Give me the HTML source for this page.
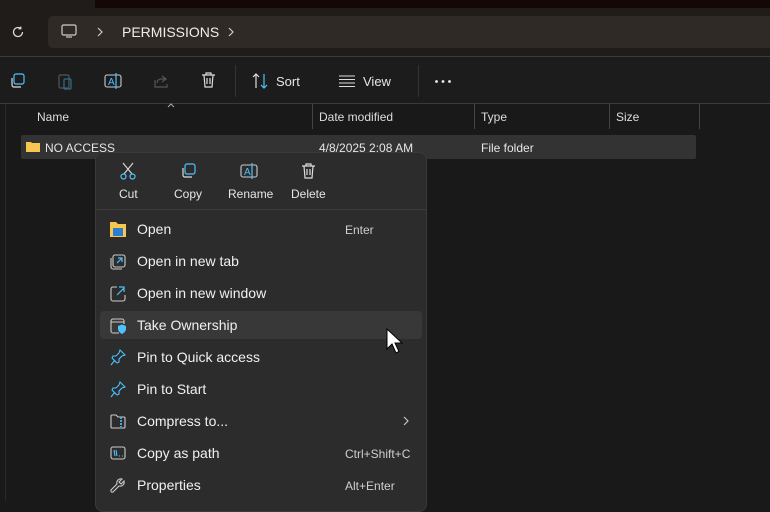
<!DOCTYPE html>
<html><head><style>
*{margin:0;padding:0;box-sizing:border-box}
body{width:770px;height:501px;overflow:hidden;background:#191919;font-family:"Liberation Sans",sans-serif;color:#e6e6e6;position:relative;font-size:13px}
.a{position:absolute}
svg{position:absolute;overflow:visible}
.mi{position:absolute;left:137px;font-size:14px;color:#f0f0f0}
.sc{position:absolute;font-size:12px;color:#cfcfcf}
</style></head><body>
<div class="a" style="left:0;top:0;width:770px;height:56px;background:#201c1a"></div>
<div class="a" style="left:95px;top:0;width:675px;height:8px;background:#130806"></div>
<div class="a" style="left:48px;top:16px;width:722px;height:32px;background:#302a27;border-radius:5px 0 0 5px"></div>
<svg style="left:11px;top:25px" width="14" height="14" viewBox="0 0 14 14"><path d="M11.5 7A4.5 4.5 0 1 1 9.5 3.3M9.8 1.5v2.3h-2.3" fill="none" stroke="#ddd" stroke-width="1.2"/></svg>
<svg style="left:61px;top:24px" width="16" height="14"><rect x="1" y="1" width="14" height="10" rx="1.5" fill="none" stroke="#ccc" stroke-width="1.2"/><path d="M5 13h6" stroke="#ccc" stroke-width="1.2"/></svg>
<svg style="left:97px;top:27px" width="6" height="10"><path d="M1 1l4 4-4 4" fill="none" stroke="#ccc" stroke-width="1.2"/></svg>
<div class="a" style="left:122px;top:24px;font-size:14px;color:#eee">PERMISSIONS</div>
<svg style="left:228px;top:27px" width="6" height="10"><path d="M1 1l4 4-4 4" fill="none" stroke="#ccc" stroke-width="1.2"/></svg>
<div class="a" style="left:0;top:56px;width:770px;height:1px;background:#3a3a3a"></div>
<div class="a" style="left:0;top:57px;width:770px;height:46px;background:#1c1c1c"></div>
<div class="a" style="left:0;top:103px;width:770px;height:1px;background:#3a3a3a"></div>
<svg style="left:10px;top:73px" width="15" height="16"><rect x="4" y="1" width="10" height="10" rx="2" fill="none" stroke="#4cc2ff" stroke-width="1.2"/><path d="M2 5v7a2 2 0 0 0 2 2h7" fill="none" stroke="#ddd" stroke-width="1.2"/></svg>
<svg style="left:58px;top:73px" width="15" height="17"><rect x="1" y="2" width="10" height="13" rx="1.5" fill="none" stroke="#555" stroke-width="1.2"/><rect x="6" y="6" width="7" height="10" rx="1" fill="none" stroke="#2a6f93" stroke-width="1.2"/></svg>
<svg style="left:104px;top:73px" width="18" height="16"><rect x="1" y="2" width="16" height="12" rx="2" fill="none" stroke="#ccc" stroke-width="1.1"/><text x="4" y="12" font-size="10" fill="#4cc2ff" font-family="Liberation Sans">A</text><path d="M12 0v16" stroke="#4cc2ff" stroke-width="1.2"/></svg>
<svg style="left:153px;top:73px" width="16" height="16"><path d="M2 7v7h12v-3M9 3l4 3-4 3M13 6H8a4 4 0 0 0-4 4" fill="none" stroke="#555" stroke-width="1.2"/></svg>
<svg style="left:201px;top:72px" width="15" height="17"><path d="M1 3h13M5 3V1h5v2M3 3l1 12h7l1-12M6 6v6M9 6v6" fill="none" stroke="#ddd" stroke-width="1.2"/></svg>
<div class="a" style="left:235px;top:65px;width:1px;height:32px;background:#333"></div>
<svg style="left:252px;top:73px" width="18" height="16"><path d="M4 15V1M1 4l3-3 3 3" fill="none" stroke="#ddd" stroke-width="1.2"/><path d="M12 1v14M9 12l3 3 3-3" fill="none" stroke="#4cc2ff" stroke-width="1.2"/></svg>
<div class="a" style="left:276px;top:74px;font-size:13px">Sort</div>
<svg style="left:339px;top:75px" width="16" height="12"><path d="M0 1h16M0 4.5h16M0 8h16M0 11.5h16" stroke="#ddd" stroke-width="1"/></svg>
<div class="a" style="left:363px;top:74px;font-size:13px">View</div>
<div class="a" style="left:418px;top:65px;width:1px;height:32px;background:#333"></div>
<svg style="left:435px;top:80px" width="18" height="3"><circle cx="1.5" cy="1.5" r="1.4" fill="#eee"/><circle cx="8" cy="1.5" r="1.4" fill="#eee"/><circle cx="14.5" cy="1.5" r="1.4" fill="#eee"/></svg>
<div class="a" style="left:5px;top:104px;width:1px;height:397px;background:#2a2a2a"></div>
<svg style="left:167px;top:103px" width="8" height="5"><path d="M1 4l3-3 3 3" fill="none" stroke="#aaa" stroke-width="1"/></svg>
<div class="a" style="left:37px;top:110px;font-size:12px;color:#ddd">Name</div>
<div class="a" style="left:312px;top:104px;width:1px;height:25px;background:#444"></div>
<div class="a" style="left:319px;top:110px;font-size:12px;color:#ddd">Date modified</div>
<div class="a" style="left:474px;top:104px;width:1px;height:25px;background:#444"></div>
<div class="a" style="left:481px;top:110px;font-size:12px;color:#ddd">Type</div>
<div class="a" style="left:609px;top:104px;width:1px;height:25px;background:#444"></div>
<div class="a" style="left:616px;top:110px;font-size:12px;color:#ddd">Size</div>
<div class="a" style="left:699px;top:104px;width:1px;height:25px;background:#444"></div>
<div class="a" style="left:21px;top:135px;width:675px;height:24px;background:#333;border-radius:2px"></div>
<svg style="left:26px;top:141px" width="14" height="11"><path d="M0 1h5l1 1h8v9H0z" fill="#f7c64f"/></svg>
<div class="a" style="left:45px;top:141px;font-size:12px">NO ACCESS</div>
<div class="a" style="left:319px;top:141px;font-size:12px">4/8/2025 2:08 AM</div>
<div class="a" style="left:481px;top:141px;font-size:12px">File folder</div>

<div class="a" style="left:95px;top:152px;width:332px;height:360px;background:#2c2c2c;border:1px solid #3a3a3a;border-radius:8px"></div>
<svg style="left:120px;top:162px" width="16" height="18"><path d="M3 1l9 11M13 1L4 12" stroke="#ddd" stroke-width="1.1"/><circle cx="3.5" cy="14.5" r="2.5" fill="none" stroke="#4cc2ff" stroke-width="1.2"/><circle cx="12.5" cy="14.5" r="2.5" fill="none" stroke="#4cc2ff" stroke-width="1.2"/></svg>
<div class="a" style="left:119px;top:187px;font-size:12px">Cut</div>
<svg style="left:181px;top:163px" width="15" height="16"><rect x="4" y="1" width="10" height="10" rx="2" fill="none" stroke="#4cc2ff" stroke-width="1.2"/><path d="M2 5v7a2 2 0 0 0 2 2h7" fill="none" stroke="#ddd" stroke-width="1.2"/></svg>
<div class="a" style="left:174px;top:187px;font-size:12px">Copy</div>
<svg style="left:240px;top:163px" width="18" height="16"><rect x="1" y="2" width="16" height="12" rx="2" fill="none" stroke="#ccc" stroke-width="1.1"/><text x="4" y="12" font-size="10" fill="#4cc2ff" font-family="Liberation Sans">A</text><path d="M12 0v16" stroke="#4cc2ff" stroke-width="1.2"/></svg>
<div class="a" style="left:228px;top:187px;font-size:12px">Rename</div>
<svg style="left:301px;top:163px" width="15" height="17"><path d="M1 3h13M5 3V1h5v2M3 3l1 12h7l1-12M6 6v6M9 6v6" fill="none" stroke="#ddd" stroke-width="1.2"/></svg>
<div class="a" style="left:291px;top:187px;font-size:12px">Delete</div>
<div class="a" style="left:96px;top:209px;width:330px;height:1px;background:#3c3c3c"></div>
<div class="a" style="left:100px;top:311px;width:322px;height:28px;background:#383838;border-radius:4px"></div>

<svg style="left:110px;top:221px" width="16" height="16"><path d="M0 1h6l2 2h8v13H0z" fill="#f7c64f"/><rect x="3" y="7" width="10" height="8" fill="#2b7cd3"/></svg>
<div class="mi" style="top:221px">Open</div><div class="sc" style="left:345px;top:223px">Enter</div>
<svg style="left:110px;top:254px" width="16" height="16"><rect x="3" y="1" width="12" height="12" rx="2" fill="none" stroke="#ccc" stroke-width="1.1"/><path d="M1 4v9a2 2 0 0 0 2 2h9" fill="none" stroke="#ccc" stroke-width="1.1"/><path d="M7 9l5-5M8 4h4v4" fill="none" stroke="#4cc2ff" stroke-width="1.2"/></svg>
<div class="mi" style="top:253px">Open in new tab</div>
<svg style="left:110px;top:286px" width="16" height="16"><path d="M7 1H3a2 2 0 0 0-2 2v10a2 2 0 0 0 2 2h10a2 2 0 0 0 2-2V9" fill="none" stroke="#ccc" stroke-width="1.1"/><path d="M7 9l7-7M9 1h5v5" fill="none" stroke="#4cc2ff" stroke-width="1.2"/></svg>
<div class="mi" style="top:285px">Open in new window</div>
<svg style="left:110px;top:318px" width="16" height="16"><path d="M9 15H3a2 2 0 0 1-2-2V3a2 2 0 0 1 2-2h9a2 2 0 0 1 2 2v3M1 4h13" fill="none" stroke="#ccc" stroke-width="1.1"/><path d="M8 8l4-1.5L16 8v3c0 2-2 4-4 5-2-1-4-3-4-5z" fill="#4cc2ff"/></svg>
<div class="mi" style="top:317px">Take Ownership</div>
<svg style="left:110px;top:349px" width="16" height="17"><path d="M10 1l5 5-3 1-3 3 0 3-2 1-5-5 1-2h3l3-3z M5 11l-4 5" fill="none" stroke="#4cc2ff" stroke-width="1.1"/></svg>
<div class="mi" style="top:349px">Pin to Quick access</div>
<svg style="left:110px;top:381px" width="16" height="17"><path d="M10 1l5 5-3 1-3 3 0 3-2 1-5-5 1-2h3l3-3z M5 11l-4 5" fill="none" stroke="#4cc2ff" stroke-width="1.1"/></svg>
<div class="mi" style="top:381px">Pin to Start</div>
<svg style="left:110px;top:413px" width="16" height="16"><path d="M1 3a1 1 0 0 1 1-1h4l2 2h6a1 1 0 0 1 1 1v9a1 1 0 0 1-1 1H2a1 1 0 0 1-1-1z" fill="none" stroke="#ccc" stroke-width="1.1"/><path d="M11 4v10" stroke="#4cc2ff" stroke-width="1.6" stroke-dasharray="2 1"/></svg>
<div class="mi" style="top:413px">Compress to...</div>
<svg style="left:403px;top:416px" width="6" height="10"><path d="M1 1l4 4-4 4" fill="none" stroke="#ccc" stroke-width="1.1"/></svg>
<svg style="left:110px;top:446px" width="16" height="14"><rect x="1" y="1" width="14" height="12" rx="2" fill="none" stroke="#ccc" stroke-width="1.1"/><path d="M4 4l1 6M6 4l1 6M9 10h1M12 10h1" stroke="#4cc2ff" stroke-width="1.1"/></svg>
<div class="mi" style="top:445px">Copy as path</div><div class="sc" style="left:345px;top:447px">Ctrl+Shift+C</div>
<svg style="left:110px;top:477px" width="16" height="16"><path d="M14 4l-3 3-2-2 3-3a4 4 0 0 0-5 5L1 13a1.5 1.5 0 0 0 2 2l6-6a4 4 0 0 0 5-5z" fill="none" stroke="#ccc" stroke-width="1.1"/></svg>
<div class="mi" style="top:477px">Properties</div><div class="sc" style="left:345px;top:479px">Alt+Enter</div>
<svg style="left:386px;top:328px" width="18" height="28" viewBox="0 0 18 28"><path d="M1 1v20l5-5 4 9 3-1.5-4-8.5h7z" fill="#fff" stroke="#000" stroke-width="1"/></svg>
</body></html>
